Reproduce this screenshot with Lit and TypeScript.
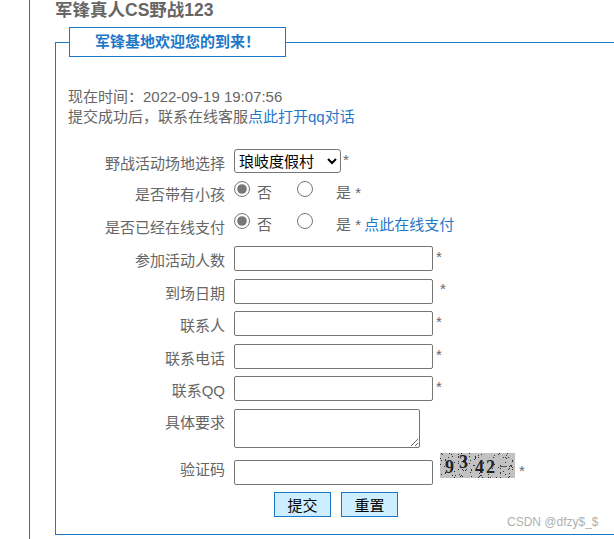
import { LitElement, html, css, svg } from "lit";
import { customElement } from "lit/decorators.js";

const dots: [number, number][] = [];
let seed = 17;
for (let i = 0; i < 110; i++) {
  seed = (seed * 73 + 41) % 1009;
  const x = seed % 75;
  seed = (seed * 73 + 41) % 1009;
  dots.push([x, seed % 25]);
}

@customElement("app-root")
export class AppRoot extends LitElement {
  static styles = css`
    :host {
      display: block;
      width: 614px;
      height: 539px;
      overflow: hidden;
      background: #fff;
      font-family: "Liberation Sans", "Noto Sans CJK SC", sans-serif;
      font-size: 15px;
      line-height: 20px;
      color: #666;
    }
    .page {
      box-sizing: border-box;
      height: 539px;
      margin-left: 29px;
      width: 620px;
      border-left: 1px solid #1e78c8;
      padding-left: 25px;
    }
    h1 {
      margin: 0;
      height: 27px;
      font-size: 17.5px;
      line-height: 20px;
      font-weight: bold;
      color: #666;
    }
    fieldset {
      box-sizing: border-box;
      margin: 0;
      width: 590px;
      height: 508px;
      padding: 0 0 0 12px;
      border: 1px solid #1e78c8;
      min-inline-size: 0;
    }
    legend {
      box-sizing: border-box;
      width: 217px;
      height: 30px;
      margin: 0 auto 0 1px;
      padding: 0;
      border: 1px solid #1e78c8;
      background: #fff;
      color: #1e78c8;
      font-size: 15px;
      font-weight: bold;
      line-height: 28px;
      text-align: center;
    }
    .info {
      margin-top: 30px;
    }
    a {
      color: #1e78c8;
      text-decoration: none;
    }
    form {
      margin-top: 22px;
      display: grid;
      grid-template-columns: 157px 1fr;
      column-gap: 9px;
      grid-template-rows: 32px 32px 33px 33px 32px 33px 32px 33px 44px 39px 26px;
    }
    .lab {
      text-align: right;
      padding-top: 5px;
      white-space: nowrap;
    }
    .lab.t4 {
      padding-top: 4px;
    }
    .lab.t7 {
      padding-top: 7px;
    }
    .ctl {
      display: flex;
      align-items: flex-start;
      white-space: nowrap;
    }
    .star {
      margin: 1px 0 0 3px;
      line-height: 20px;
    }
    .star.tight {
      margin-left: 2px;
    }
    .star.wide {
      margin: 0 0 0 7px;
    }
    select {
      box-sizing: border-box;
      width: 107px;
      height: 24px;
      margin: 0;
      font: 15px "Liberation Sans", "Noto Sans CJK SC", sans-serif;
      color: #000;
      background: #fff;
      border: 1px solid #767676;
      border-radius: 3px;
    }
    input[type="text"] {
      box-sizing: border-box;
      width: 199px;
      height: 25px;
      margin: 0;
      padding: 0 2px;
      background: #fff;
      border: 1px solid #767676;
      border-radius: 2px;
    }
    input[type="radio"] {
      width: 16px;
      height: 16px;
      margin: 0;
      accent-color: #777;
      flex: none;
    }
    .opt {
      margin: 2px 0 0 7px;
    }
    .opt.second {
      margin-left: 23px;
    }
    .radio2 {
      margin-left: 25px !important;
    }
    .pay-link {
      margin-left: -1px;
    }
    textarea {
      box-sizing: border-box;
      width: 186px;
      height: 39px;
      margin: 0;
      background: #fff;
      border: 1px solid #767676;
      border-radius: 2px;
    }
    .code-input {
      margin-top: 7px !important;
    }
    .captcha {
      margin-left: 7px;
      flex: none;
      display: block;
    }
    .captcha text {
      font-family: "Liberation Serif", serif;
      font-size: 18px;
      font-weight: bold;
      fill: #222;
    }
    .code-star {
      margin: 8px 0 0 4px;
    }
    .buttons {
      grid-column: 2;
      padding-left: 40px;
      display: flex;
      gap: 10px;
      align-items: flex-start;
    }
    button {
      box-sizing: border-box;
      width: 57px;
      height: 25px;
      padding: 0;
      font: 15px "Liberation Sans", "Noto Sans CJK SC", sans-serif;
      color: #000;
      background: #cdeeff;
      border: 1px solid #1e78c8;
    }
    .mark {
      position: absolute;
      left: 507px;
      top: 514px;
      font-size: 12px;
      line-height: 16px;
      color: #b0b0b0;
    }
  `;

  private star(kind = "") {
    return html`<span class="star ${kind}">*</span>`;
  }

  render() {
    return html`
      <div class="page">
        <h1>军锋真人CS野战123</h1>
        <fieldset>
          <legend>军锋基地欢迎您的到来！</legend>
          <div class="info">
            现在时间：2022-09-19 19:07:56<br />
            提交成功后，联系在线客服<a href="#">点此打开qq对话</a>
          </div>
          <form>
            <div class="lab">野战活动场地选择</div>
            <div class="ctl">
              <select><option>琅岐度假村</option></select>${this.star("tight")}
            </div>

            <div class="lab t4">是否带有小孩</div>
            <div class="ctl">
              <input type="radio" name="kid" checked />
              <span class="opt">否</span>
              <input class="radio2" type="radio" name="kid" />
              <span class="opt second">是 *</span>
            </div>

            <div class="lab">是否已经在线支付</div>
            <div class="ctl">
              <input type="radio" name="pay" checked />
              <span class="opt">否</span>
              <input class="radio2" type="radio" name="pay" />
              <span class="opt second">是 * <a class="pay-link" href="#">点此在线支付</a></span>
            </div>

            <div class="lab">参加活动人数</div>
            <div class="ctl"><input type="text" />${this.star()}</div>

            <div class="lab">到场日期</div>
            <div class="ctl"><input type="text" />${this.star("wide")}</div>

            <div class="lab">联系人</div>
            <div class="ctl"><input type="text" />${this.star()}</div>

            <div class="lab">联系电话</div>
            <div class="ctl"><input type="text" />${this.star()}</div>

            <div class="lab">联系QQ</div>
            <div class="ctl"><input type="text" />${this.star()}</div>

            <div class="lab t4">具体要求</div>
            <div class="ctl"><textarea></textarea></div>

            <div class="lab t7">验证码</div>
            <div class="ctl">
              <input class="code-input" type="text" />
              <svg class="captcha" width="75" height="25" viewBox="0 0 75 25">
                <rect width="75" height="25" fill="#c2c2c2"></rect>
                ${dots.map(
                  ([x, y]) =>
                    svg`<rect x=${x} y=${y} width="1" height="1" fill="#333"></rect>`
                )}
                <text x="5" y="20">9</text>
                <text x="19" y="15">3</text>
                <text x="35" y="20">4</text>
                <text x="46" y="20">2</text>
                <rect x="60" y="13" width="7" height="1" fill="#555"></rect>
              </svg>
              <span class="code-star">*</span>
            </div>

            <div class="buttons">
              <button type="button">提交</button>
              <button type="button">重置</button>
            </div>
          </form>
        </fieldset>
      </div>
      <div class="mark">CSDN @dfzy$_$</div>
    `;
  }
}
